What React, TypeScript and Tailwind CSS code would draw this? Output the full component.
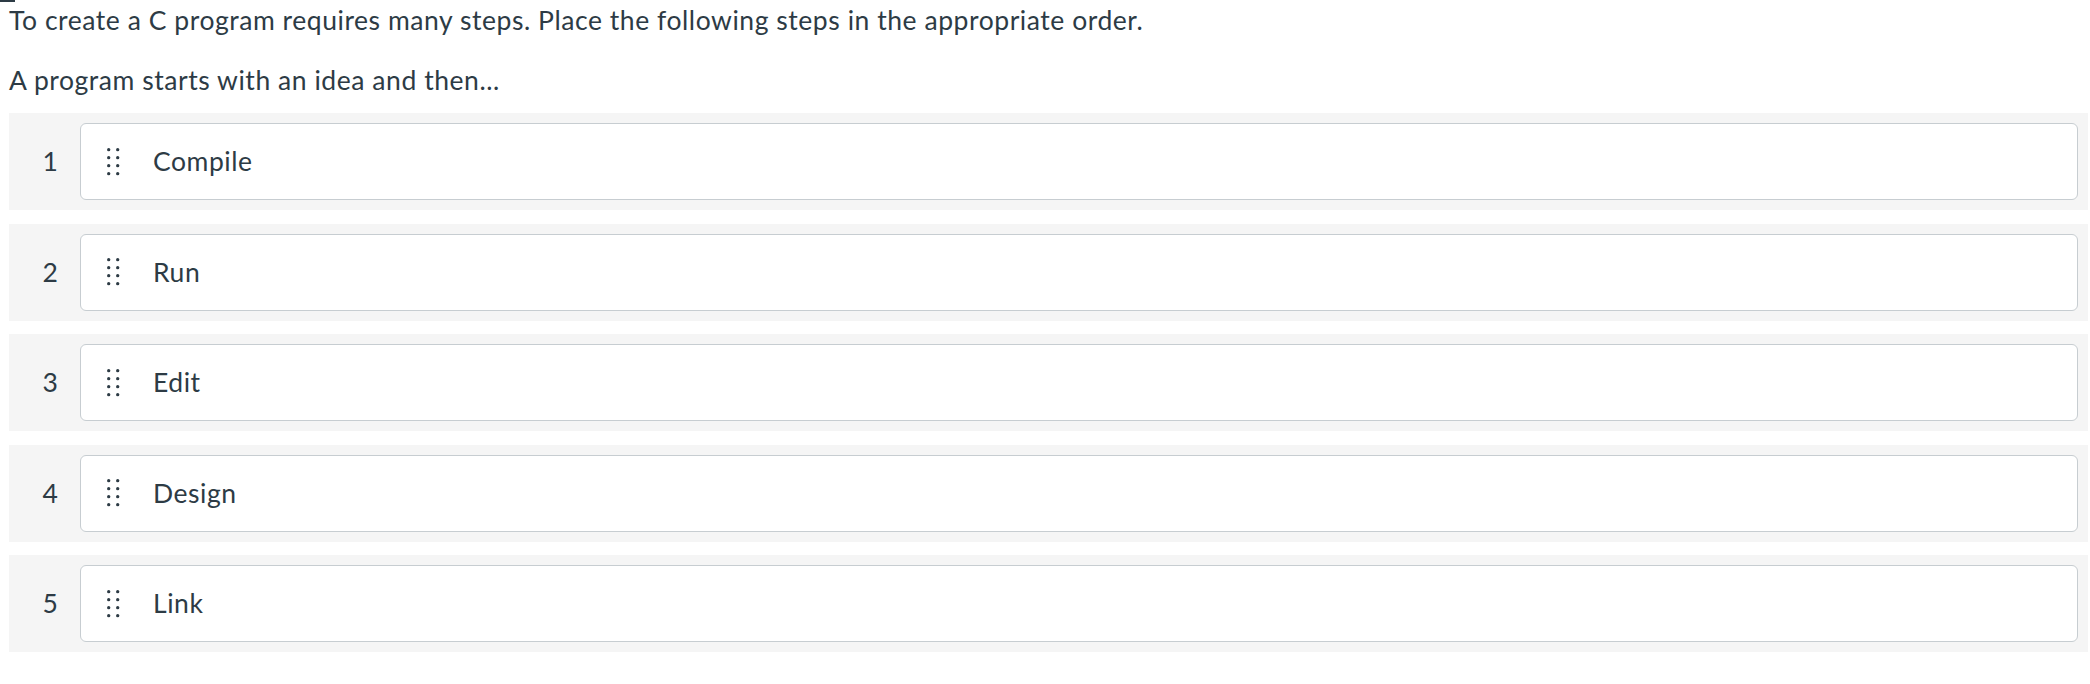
import React from 'react'

const steps = ['Compile', 'Run', 'Edit', 'Design', 'Link']

function DragHandle() {
  const cols = [1.7, 10.7]
  const rows = [1.7, 9.7, 17.7, 25.7]
  return (
    <svg width="13" height="28" viewBox="0 0 13 28" className="shrink-0" aria-hidden="true">
      {rows.map((cy) =>
        cols.map((cx) => <circle key={`${cx}-${cy}`} cx={cx} cy={cy} r="1.65" fill="#2d3b45" />)
      )}
    </svg>
  )
}

export default function App() {
  return (
    <div className="min-h-screen bg-white text-[#2d3b45] font-['Lato','Liberation_Sans',sans-serif] text-[26.5px] tracking-[0.55px]">
      <div className="w-[15px] h-[2px] bg-[#2d3b45]" />
      <p className="pl-[9px] leading-[36px]">
        To create a C program requires many steps. Place the following steps in the appropriate order.
      </p>
      <p className="pl-[9px] mt-[24px] leading-[36px]">A program starts with an idea and then...</p>

      <ul className="mt-[15px] ml-[9px] mr-[2px] flex flex-col gap-[13.5px]">
        {steps.map((step, i) => (
          <li key={step} className="h-[97px] bg-[#f5f5f5] flex items-center">
            <div className="w-[71px] pl-[12px] text-center leading-none">{i + 1}</div>
            <div className="flex-1 mr-[10px] h-[77px] bg-white border border-[#c7cdd1] rounded-[6px] flex items-center pl-[26px]">
              <DragHandle />
              <span className="ml-[33px] leading-none">{step}</span>
            </div>
          </li>
        ))}
      </ul>
    </div>
  )
}
